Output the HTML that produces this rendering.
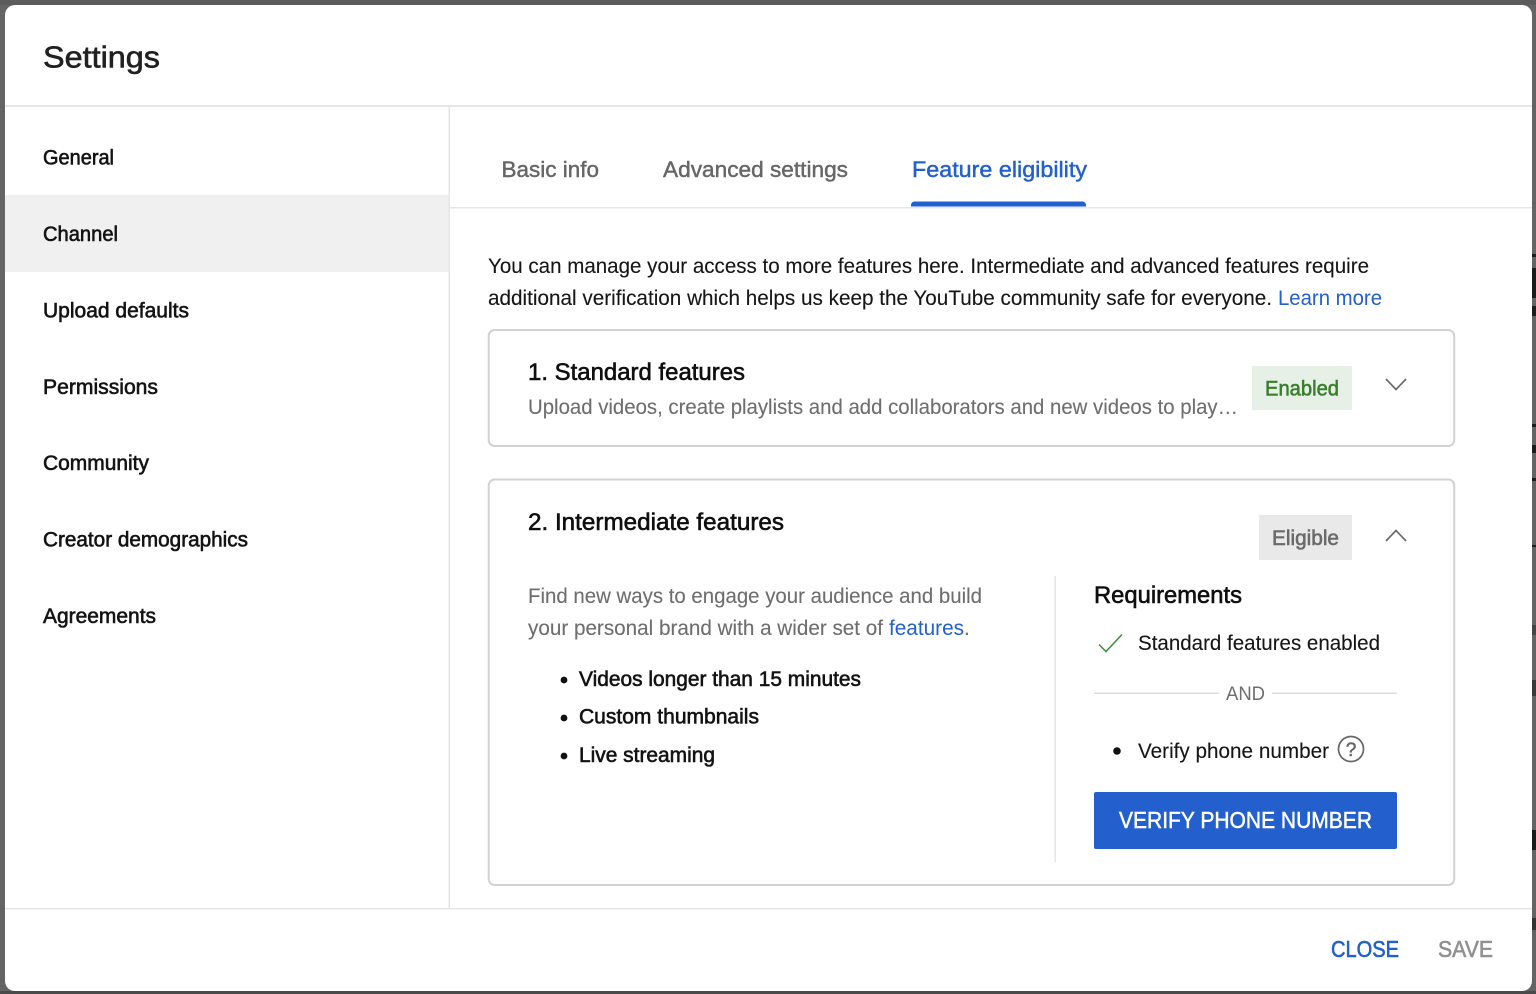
<!DOCTYPE html>
<html><head><meta charset="utf-8"><title>Settings</title>
<style>
html,body{margin:0;padding:0;width:1536px;height:994px;overflow:hidden;background:#646464}
svg{display:block;position:absolute;left:0;top:0}
text{font-family:"Liberation Sans",sans-serif;white-space:pre}
.m{stroke-width:.6px}
.nav{font-size:21px;fill:#131313;stroke:#131313}
.tab{font-size:22.5px;stroke-width:.45px}
.body{font-size:21px;fill:#161616;stroke:#161616;stroke-width:.12px}
.gr{font-size:21px;fill:#6e6e6e;stroke:#6e6e6e;stroke-width:.12px}
.h{font-size:24px;fill:#0f0f0f;stroke:#0f0f0f}
</style></head><body>
<svg width="1536" height="994" viewBox="0 0 1536 994" xmlns="http://www.w3.org/2000/svg">
<rect width="1536" height="994" fill="#646464"/>
<rect x="0" y="0" width="1536" height="5" fill="#5c5c5c"/>
<rect x="0" y="991" width="1536" height="3" fill="#4a4a4a"/>
<g fill="#1c1c1c">
<rect x="1532" y="254" width="4" height="3"/><rect x="1532" y="268" width="4" height="30"/><rect x="1532" y="306" width="4" height="10"/>
<rect x="1532" y="424" width="4" height="3"/><rect x="1532" y="445" width="4" height="8"/><rect x="1532" y="478" width="4" height="3"/>
<rect x="1532" y="545" width="4" height="2"/><rect x="1532" y="625" width="4" height="10" fill="#444"/><rect x="1532" y="680" width="4" height="16" fill="#3a3a3a"/>
<rect x="1532" y="830" width="4" height="20"/><rect x="1532" y="918" width="4" height="12" fill="#333"/>
</g>
<rect x="5" y="5" width="1527" height="986" rx="10" fill="#fff"/>
<rect x="5" y="195" width="444" height="77" fill="#f0f0f0"/>
<g fill="#e6e6e6">
<rect x="5" y="105" width="1527" height="2"/>
<rect x="448.500" y="107" width="1.500" height="801"/>
<rect x="450" y="207" width="1082" height="1.500"/>
<rect x="5" y="908" width="1527" height="1.500"/>
<rect x="1054.500" y="576" width="1.500" height="286"/>
<rect x="1094" y="692.500" width="125" height="1.500" fill="#dcdcdc"/>
<rect x="1272" y="692.500" width="125" height="1.500" fill="#dcdcdc"/>
</g>
<path d="M911 206.500v-1.500a3.500 3.500 0 0 1 3.500-3.500h168a3.500 3.500 0 0 1 3.500 3.500v1.500z" fill="#2360cf"/>
<rect x="488.700" y="330" width="965.500" height="116" rx="6" fill="none" stroke="#d2d2d2" stroke-width="2"/>
<rect x="488.700" y="479.500" width="965.500" height="405.500" rx="6" fill="none" stroke="#d2d2d2" stroke-width="2"/>
<rect x="1252" y="366" width="100" height="44" fill="#e6f0e6"/>
<rect x="1259" y="515" width="93" height="45" fill="#e9e9e9"/>
<path d="M1386 379L1396 389.500L1406 379" fill="none" stroke="#6a6a6a" stroke-width="1.700"/>
<path d="M1386 541L1396 530.500L1406 541" fill="none" stroke="#6a6a6a" stroke-width="1.700"/>
<path d="M1099 644.500L1106 651.500L1122 634.500" fill="none" stroke="#3f8a3f" stroke-width="1.500"/>
<circle cx="1351" cy="749" r="12.500" fill="none" stroke="#666" stroke-width="1.700"/>
<text x="1351" y="756" font-size="19" text-anchor="middle" fill="#666" stroke="#666" stroke-width=".5">?</text>
<circle cx="1117" cy="751" r="3.800" fill="#111"/>
<circle cx="564" cy="680" r="3.400" fill="#111"/>
<circle cx="564" cy="718" r="3.400" fill="#111"/>
<circle cx="564" cy="756" r="3.400" fill="#111"/>
<rect x="1094" y="792" width="303" height="57" rx="2" fill="#2360cd"/>

<text x="43" y="67.500" font-size="31" fill="#212121" stroke="#212121" class="m" textLength="117" lengthAdjust="spacingAndGlyphs">Settings</text>
<text x="43" y="164.500" class="nav m" textLength="71" lengthAdjust="spacingAndGlyphs">General</text>
<text x="43" y="241" class="nav m" textLength="75" lengthAdjust="spacingAndGlyphs">Channel</text>
<text x="43" y="317.500" class="nav m" textLength="146" lengthAdjust="spacingAndGlyphs">Upload defaults</text>
<text x="43" y="394" class="nav m" textLength="115" lengthAdjust="spacingAndGlyphs">Permissions</text>
<text x="43" y="470" class="nav m" textLength="106" lengthAdjust="spacingAndGlyphs">Community</text>
<text x="43" y="546.500" class="nav m" textLength="205" lengthAdjust="spacingAndGlyphs">Creator demographics</text>
<text x="43" y="623" class="nav m" textLength="113" lengthAdjust="spacingAndGlyphs">Agreements</text>

<text x="501.500" y="177" class="tab" fill="#666" stroke="#666" textLength="97.500" lengthAdjust="spacingAndGlyphs">Basic info</text>
<text x="663" y="177" class="tab" fill="#666" stroke="#666" textLength="185" lengthAdjust="spacingAndGlyphs">Advanced settings</text>
<text x="912" y="177" class="tab" fill="#2360cf" stroke="#2360cf" textLength="175" lengthAdjust="spacingAndGlyphs">Feature eligibility</text>

<text x="488" y="273" class="body" textLength="881" lengthAdjust="spacingAndGlyphs">You can manage your access to more features here. Intermediate and advanced features require</text>
<text x="488" y="305" class="body" textLength="784" lengthAdjust="spacingAndGlyphs">additional verification which helps us keep the YouTube community safe for everyone.</text>
<text x="1278" y="305" font-size="21" fill="#2360cf" textLength="104" lengthAdjust="spacingAndGlyphs">Learn more</text>

<text x="528" y="380" class="h m" textLength="217" lengthAdjust="spacingAndGlyphs">1. Standard features</text>
<text x="528" y="414" class="gr" textLength="710" lengthAdjust="spacingAndGlyphs">Upload videos, create playlists and add collaborators and new videos to play…</text>
<text x="1265" y="395.500" font-size="21.500" fill="#3b7f2e" stroke="#3b7f2e" class="m" textLength="74" lengthAdjust="spacingAndGlyphs">Enabled</text>

<text x="528" y="530" class="h m" textLength="256" lengthAdjust="spacingAndGlyphs">2. Intermediate features</text>
<text x="1272" y="545" font-size="21.500" fill="#6a6a6a" stroke="#6a6a6a" class="m" textLength="67" lengthAdjust="spacingAndGlyphs">Eligible</text>
<text x="528" y="603" class="gr" textLength="454" lengthAdjust="spacingAndGlyphs">Find new ways to engage your audience and build</text>
<text x="528" y="635" class="gr" textLength="355" lengthAdjust="spacingAndGlyphs">your personal brand with a wider set of</text>
<text x="889" y="635" font-size="21" fill="#2360cf" textLength="75" lengthAdjust="spacingAndGlyphs">features</text>
<text x="964" y="635" class="gr">.</text>
<text x="579" y="686" class="nav m" textLength="282" lengthAdjust="spacingAndGlyphs">Videos longer than 15 minutes</text>
<text x="579" y="723.500" class="nav m" textLength="180" lengthAdjust="spacingAndGlyphs">Custom thumbnails</text>
<text x="579" y="762" class="nav m" textLength="136" lengthAdjust="spacingAndGlyphs">Live streaming</text>

<text x="1094" y="603" class="h m" textLength="148" lengthAdjust="spacingAndGlyphs">Requirements</text>
<text x="1138" y="650" class="body" textLength="242" lengthAdjust="spacingAndGlyphs">Standard features enabled</text>
<text x="1226" y="700" font-size="19" fill="#6e6e6e" textLength="39" lengthAdjust="spacingAndGlyphs">AND</text>
<text x="1138" y="758" class="body" textLength="191" lengthAdjust="spacingAndGlyphs">Verify phone number</text>
<text x="1119" y="828" font-size="23" fill="#fff" stroke="#fff" stroke-width=".5" textLength="253" lengthAdjust="spacingAndGlyphs">VERIFY PHONE NUMBER</text>
<text x="1331" y="957" font-size="23" fill="#2360cf" stroke="#2360cf" class="m" textLength="68" lengthAdjust="spacingAndGlyphs">CLOSE</text>
<text x="1438" y="957" font-size="23" fill="#909090" stroke="#909090" class="m" textLength="55" lengthAdjust="spacingAndGlyphs">SAVE</text>
</svg>
</body></html>
